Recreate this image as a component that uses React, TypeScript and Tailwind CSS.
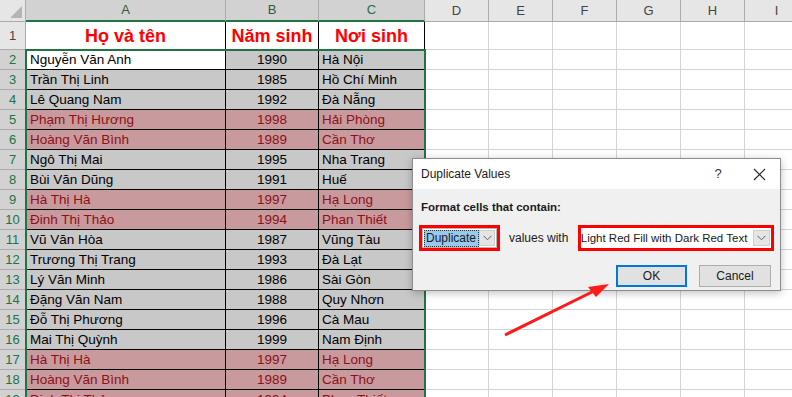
import React from "react";

type Row = { name: string; year: string; city: string; dup?: boolean };

const rows: Row[] = [
  { name: "Nguyễn Văn Anh", year: "1990", city: "Hà Nội" },
  { name: "Trần Thị Linh", year: "1985", city: "Hồ Chí Minh" },
  { name: "Lê Quang Nam", year: "1992", city: "Đà Nẵng" },
  { name: "Phạm Thị Hương", year: "1998", city: "Hải Phòng", dup: true },
  { name: "Hoàng Văn Bình", year: "1989", city: "Cần Thơ", dup: true },
  { name: "Ngô Thị Mai", year: "1995", city: "Nha Trang" },
  { name: "Bùi Văn Dũng", year: "1991", city: "Huế" },
  { name: "Hà Thị Hà", year: "1997", city: "Hạ Long", dup: true },
  { name: "Đinh Thị Thảo", year: "1994", city: "Phan Thiết", dup: true },
  { name: "Vũ Văn Hòa", year: "1987", city: "Vũng Tàu" },
  { name: "Trương Thị Trang", year: "1993", city: "Đà Lạt" },
  { name: "Lý Văn Minh", year: "1986", city: "Sài Gòn" },
  { name: "Đặng Văn Nam", year: "1988", city: "Quy Nhơn" },
  { name: "Đỗ Thị Phương", year: "1996", city: "Cà Mau" },
  { name: "Mai Thị Quỳnh", year: "1999", city: "Nam Định" },
  { name: "Hà Thị Hà", year: "1997", city: "Hạ Long", dup: true },
  { name: "Hoàng Văn Bình", year: "1989", city: "Cần Thơ", dup: true },
  { name: "Đinh Thị Thảo", year: "1994", city: "Phan Thiết", dup: true },
];

const emptyCols = ["D", "E", "F", "G", "H", "I"];

function EmptyCells() {
  return (
    <>
      {emptyCols.map((c) => (
        <div key={c} className="w-[64px] shrink-0 border-r border-b border-[#d4d4d4]" />
      ))}
    </>
  );
}

function ChevronDown() {
  return (
    <svg width="9" height="6" viewBox="0 0 9 6" fill="none">
      <path d="M0.5 0.8 L4.5 4.8 L8.5 0.8" stroke="#606060" strokeWidth="1" />
    </svg>
  );
}

function Dialog() {
  return (
    <div className="absolute left-[412px] top-[158px] w-[369px] h-[133px] border border-[#8c8c8c] bg-[#f0f0f0] shadow-[0_2px_8px_rgba(0,0,0,0.25)] font-['Liberation_Sans',Arial,sans-serif] text-[11.5px] text-[#1a1a1a]">
      {/* title bar */}
      <div className="flex h-[30px] items-center bg-white pl-[8px]">
        <span className="flex-1 text-[12px]">Duplicate Values</span>
        <span className="w-[20px] text-center text-[13px] text-[#333]">?</span>
        <span className="ml-[24px] mr-[14px] flex h-[14px] w-[14px] items-center justify-center">
          <svg width="13" height="13" viewBox="0 0 13 13">
            <path d="M1 1 L12 12 M12 1 L1 12" stroke="#222" strokeWidth="1.1" />
          </svg>
        </span>
      </div>

      {/* body */}
      <div className="px-[6px] pt-[10px]">
        <div className="pl-[2px] font-bold">Format cells that contain:</div>

        <div className="mt-[9px] flex items-center">
          <div className="h-[26px] w-[81px] border-[3px] border-[#ff0000] bg-white">
            <div className="flex h-full items-center border border-[#b4b4b4] bg-white">
              <span className="ml-[1px] h-[17px] w-[57px] border border-dotted border-[#333] bg-[#99c9ef] pl-[1px] text-[12px] leading-[15px]">
                Duplicate
              </span>
              <span className="ml-auto mr-[1px] flex h-[16px] w-[16px] items-center justify-center border border-[#cfcfcf] bg-[#e5e5e5]">
                <ChevronDown />
              </span>
            </div>
          </div>

          <span className="ml-[9px] w-[69px] text-[12px]">values with</span>

          <div className="h-[26px] w-[197px] border-[3px] border-[#ff0000] bg-white">
            <div className="flex h-full items-center bg-white">
              <span>Light Red Fill with Dark Red Text</span>
              <span className="ml-auto mr-[1px] flex h-[16px] w-[17px] items-center justify-center border border-[#cfcfcf] bg-[#e5e5e5]">
                <ChevronDown />
              </span>
            </div>
          </div>
        </div>

        <div className="mt-[14px] flex justify-end gap-[12px] pr-[3px]">
          <button className="h-[22px] w-[71px] border-2 border-[#0078d7] bg-[#e1e1e1] text-[12px]">OK</button>
          <button className="h-[22px] w-[72px] border border-[#adadad] bg-[#e1e1e1] text-[12px]">Cancel</button>
        </div>
      </div>
    </div>
  );
}

export default function App() {
  const cellBase = "shrink-0 border-r border-b border-black flex items-center";
  return (
    <div className="relative h-[397px] w-[792px] overflow-hidden bg-white font-['Liberation_Sans',Arial,sans-serif] text-[13.5px] text-black">
      {/* column headers */}
      <div className="flex h-[22px] bg-[#e6e6e6] text-[13px]">
        <div className="flex w-[26px] shrink-0 items-end justify-end border-r border-b border-[#ababab] pb-[3px] pr-[3px]">
          <svg width="12" height="12" viewBox="0 0 12 12">
            <polygon points="12,0 12,12 0,12" fill="#b4b4b4" />
          </svg>
        </div>
        <div className="flex w-[200px] shrink-0 items-center justify-center border-r border-[#ababab] border-b-2 border-b-[#217346] bg-[#d2d2d2] text-[#2e5c3e]">A</div>
        <div className="flex w-[93px] shrink-0 items-center justify-center border-r border-[#ababab] border-b-2 border-b-[#217346] bg-[#d2d2d2] text-[#2e5c3e]">B</div>
        <div className="flex w-[106px] shrink-0 items-center justify-center border-r border-[#ababab] border-b-2 border-b-[#217346] bg-[#d2d2d2] text-[#217346]">C</div>
        {emptyCols.map((c) => (
          <div key={c} className="flex w-[64px] shrink-0 items-center justify-center border-r border-b border-[#ababab] text-[#444]">
            {c}
          </div>
        ))}
      </div>

      {/* row 1 */}
      <div className="flex h-[28px]">
        <div className="flex w-[26px] shrink-0 items-center justify-center border-r border-b border-[#ababab] bg-[#e6e6e6] pt-[1px] text-[13px] text-[#444]">1</div>
        <div className={`${cellBase} w-[200px] justify-center pt-[1px] text-[18px] font-bold text-[#ff0000]`}>Họ và tên</div>
        <div className={`${cellBase} w-[93px] justify-center pt-[1px] text-[18px] font-bold text-[#ff0000]`}>Năm sinh</div>
        <div className={`${cellBase} w-[106px] justify-center pt-[1px] text-[18px] font-bold text-[#ff0000]`}>Nơi sinh</div>
        <EmptyCells />
      </div>

      {/* data rows */}
      {rows.map((r, i) => {
        const fill = r.dup ? "bg-[#c89a9e] text-[#8c1016]" : "bg-[#c8c8c8]";
        const first = i === 0 ? "bg-white" : fill;
        return (
          <div key={i} className="flex h-[20px]">
            <div className="flex w-[26px] shrink-0 items-center justify-center border-r border-b border-[#ababab] bg-[#d2d2d2] pt-[1px] text-[13px] text-[#217346]">
              {i + 2}
            </div>
            <div className={`${cellBase} w-[200px] pl-[4px] pt-[1px] ${first}`}>{r.name}</div>
            <div className={`${cellBase} w-[93px] justify-center pt-[1px] ${fill}`}>{r.year}</div>
            <div className={`${cellBase} w-[106px] pl-[3px] pt-[1px] ${fill}`}>{r.city}</div>
            <EmptyCells />
          </div>
        );
      })}

      {/* selection outline */}
      <div className="pointer-events-none absolute left-[25px] top-[49px] h-[360px] w-[401px] border-2 border-[#217346]" />

      <Dialog />

      {/* annotation arrow */}
      <svg className="pointer-events-none absolute left-0 top-0" width="792" height="397">
        <line x1="505" y1="335" x2="594" y2="291" stroke="#ff1a1a" strokeWidth="3" />
        <polygon points="609,284 588,287 596,297" fill="#ff1a1a" />
      </svg>
    </div>
  );
}
